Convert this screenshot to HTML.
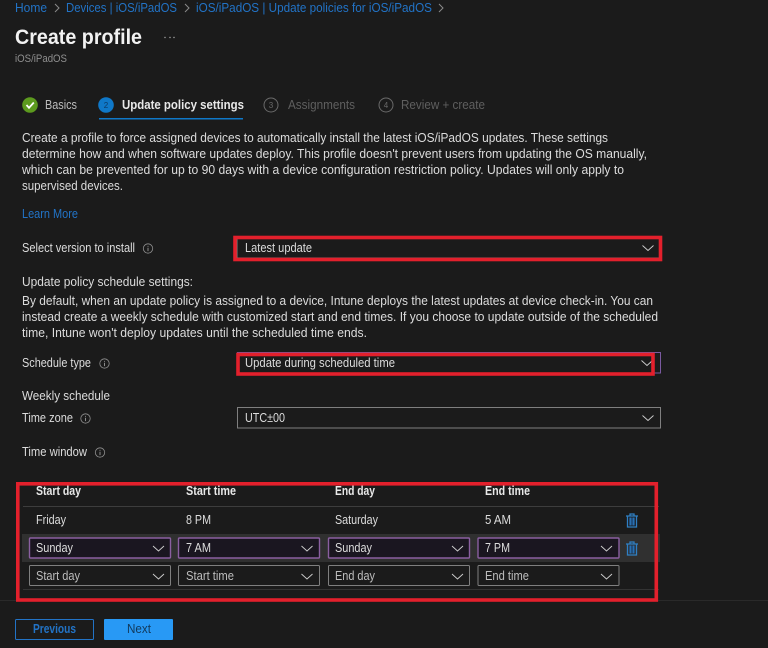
<!DOCTYPE html>
<html><head><meta charset="utf-8"><title>Create profile</title>
<style>
html,body{margin:0;padding:0;background:#1b1b1b;width:768px;height:648px;overflow:hidden}
svg{display:block;font-family:"Liberation Sans",sans-serif;font-size:12.5px;filter:blur(.35px)}
text{fill:#dcdcdc;white-space:pre}
.l{fill:#2273c6}
.m{fill:#5f5f5f}
.h{font-weight:bold;fill:#e8e8e8}
.s{fill:none;stroke:#7f7f7f;stroke-width:1}
.p{fill:#1a1620;stroke:#8a5fa0;stroke-width:1.4}
.c{fill:none;stroke:#cfcfcf;stroke-width:.9}
.i{fill:none;stroke:#8f8f8f;stroke-width:.8}
.r{fill:none;stroke:#e3202c;stroke-width:3.6}
.t{fill:none;stroke:#2f7fc4;stroke-width:1.3}
</style></head><body>
<svg width="768" height="648" viewBox="0 0 768 648" xmlns="http://www.w3.org/2000/svg">
<defs>
<g id="chev"><path class="c" d="M-5.5-2.5 0 2.5 5.5-2.5"/></g>
<g id="info"><circle class="i" r="4.7"/><path d="M0-.8V2.6M0-2.6V-1.7" stroke="#9a9a9a" stroke-width=".9"/></g>
<g id="crumb"><path d="M-2-4 2 0-2 4" fill="none" stroke="#8a8a8a" stroke-width="1"/></g>
<g id="trash"><path class="t" d="M-4.5-4.5V6.5H4.5V-4.5ZM-6-4.5H6M-2-4.5V-6.5H2V-4.500"/><path d="M-3-3H3V5H-3Z" fill="#1f4f80"/><path d="M-1.5-3V5M1.5-3V5" stroke="#2f7fc4" stroke-width=".7"/></g>
</defs>

<text class="l" x="15" y="12" textLength="32" lengthAdjust="spacingAndGlyphs">Home</text>
<use href="#crumb" x="57" y="8"/>
<text class="l" x="66" y="12" textLength="111" lengthAdjust="spacingAndGlyphs">Devices | iOS/iPadOS</text>
<use href="#crumb" x="187" y="8"/>
<text class="l" x="196" y="12" textLength="236" lengthAdjust="spacingAndGlyphs">iOS/iPadOS | Update policies for iOS/iPadOS</text>
<use href="#crumb" x="441" y="8"/>

<text x="15" y="44" style="fill:#f2f2f2;font-size:21px;font-weight:bold" textLength="127" lengthAdjust="spacingAndGlyphs">Create profile</text>
<circle cx="165" cy="37.500" r=".7" fill="#aaa"/><circle cx="170" cy="37.500" r=".7" fill="#aaa"/><circle cx="174" cy="37.500" r=".7" fill="#aaa"/>
<text x="15" y="62" style="fill:#8f8f8f;font-size:11px" textLength="52" lengthAdjust="spacingAndGlyphs">iOS/iPadOS</text>

<circle cx="30" cy="105" r="7.800" fill="#5c9a1e"/>
<path d="M26.500 105 29 107.800 33.800 102.500" fill="none" stroke="#fff" stroke-width="1.800"/>
<text x="45" y="109" style="fill:#bdbdbd" textLength="32" lengthAdjust="spacingAndGlyphs">Basics</text>
<circle cx="106" cy="105" r="7.800" fill="#0f78c8"/>
<text x="106" y="108" text-anchor="middle" style="fill:#0b3a66;font-size:8px">2</text>
<text class="h" x="122" y="109" textLength="122" lengthAdjust="spacingAndGlyphs">Update policy settings</text>
<rect x="99" y="118" width="144" height="1.500" fill="#0f78c8"/>
<circle cx="271" cy="105" r="7" fill="none" stroke="#6a6a6a"/>
<text x="271" y="108" text-anchor="middle" style="fill:#6a6a6a;font-size:8px">3</text>
<text class="m" x="288" y="109" textLength="67" lengthAdjust="spacingAndGlyphs">Assignments</text>
<circle cx="386" cy="105" r="7" fill="none" stroke="#6a6a6a"/>
<text x="386" y="108" text-anchor="middle" style="fill:#6a6a6a;font-size:8px">4</text>
<text class="m" x="401" y="109" textLength="84" lengthAdjust="spacingAndGlyphs">Review + create</text>

<text x="22" y="142" textLength="586" lengthAdjust="spacingAndGlyphs">Create a profile to force assigned devices to automatically install the latest iOS/iPadOS updates. These settings</text>
<text x="22" y="158" textLength="625" lengthAdjust="spacingAndGlyphs">determine how and when software updates deploy. This profile doesn't prevent users from updating the OS manually,</text>
<text x="22" y="174" textLength="602" lengthAdjust="spacingAndGlyphs">which can be prevented for up to 90 days with a device configuration restriction policy. Updates will only apply to</text>
<text x="22" y="190" textLength="101" lengthAdjust="spacingAndGlyphs">supervised devices.</text>
<text class="l" x="22" y="218" textLength="56" lengthAdjust="spacingAndGlyphs">Learn More</text>

<text x="22" y="252" textLength="113" lengthAdjust="spacingAndGlyphs">Select version to install</text>
<use href="#info" x="148" y="248.500"/>
<rect x="237" y="238" width="424" height="20" class="s"/>
<text x="245" y="252" textLength="67" lengthAdjust="spacingAndGlyphs">Latest update</text>
<use href="#chev" x="648" y="248"/>
<rect x="235" y="237.500" width="425.500" height="22" class="r"/>

<text x="22" y="286" textLength="171" lengthAdjust="spacingAndGlyphs">Update policy schedule settings:</text>
<text x="22" y="305" textLength="631" lengthAdjust="spacingAndGlyphs">By default, when an update policy is assigned to a device, Intune deploys the latest updates at device check-in. You can</text>
<text x="22" y="321" textLength="636" lengthAdjust="spacingAndGlyphs">instead create a weekly schedule with customized start and end times. If you choose to update outside of the scheduled</text>
<text x="22" y="337" textLength="345" lengthAdjust="spacingAndGlyphs">time, Intune won't deploy updates until the scheduled time ends.</text>

<text x="22" y="367" textLength="69" lengthAdjust="spacingAndGlyphs">Schedule type</text>
<use href="#info" x="104.500" y="363.500"/>
<rect x="237.500" y="352.500" width="423" height="20.500" fill="none" stroke="#7a5aa0"/>
<text x="245" y="367" textLength="150" lengthAdjust="spacingAndGlyphs">Update during scheduled time</text>
<use href="#chev" x="647" y="363"/>
<rect x="238" y="354.500" width="415" height="19.500" class="r"/>

<text x="22" y="400" textLength="88" lengthAdjust="spacingAndGlyphs">Weekly schedule</text>
<text x="22" y="422" textLength="51" lengthAdjust="spacingAndGlyphs">Time zone</text>
<use href="#info" x="85.500" y="418.500"/>
<rect x="237.500" y="407.500" width="423" height="20.500" class="s"/>
<text x="245" y="422" textLength="40" lengthAdjust="spacingAndGlyphs">UTC±00</text>
<use href="#chev" x="648" y="418"/>
<text x="22" y="456" textLength="65" lengthAdjust="spacingAndGlyphs">Time window</text>
<use href="#info" x="100" y="452.500"/>

<text class="h" x="36" y="495" textLength="45" lengthAdjust="spacingAndGlyphs">Start day</text>
<text class="h" x="186" y="495" textLength="50" lengthAdjust="spacingAndGlyphs">Start time</text>
<text class="h" x="335" y="495" textLength="40" lengthAdjust="spacingAndGlyphs">End day</text>
<text class="h" x="485" y="495" textLength="45" lengthAdjust="spacingAndGlyphs">End time</text>
<rect x="23" y="506" width="636" height="1" fill="#3d3d3d"/>

<text x="36" y="524" textLength="30" lengthAdjust="spacingAndGlyphs">Friday</text>
<text x="186" y="524" textLength="25" lengthAdjust="spacingAndGlyphs">8 PM</text>
<text x="335" y="524" textLength="43" lengthAdjust="spacingAndGlyphs">Saturday</text>
<text x="485" y="524" textLength="26" lengthAdjust="spacingAndGlyphs">5 AM</text>
<use href="#trash" x="632" y="520.500"/>

<rect x="22" y="534" width="638" height="28" fill="#303030"/>
<rect x="29.500" y="538" width="141" height="20" rx="1" class="p"/>
<rect x="178.500" y="538" width="141" height="20" rx="1" class="p"/>
<rect x="328.500" y="538" width="141" height="20" rx="1" class="p"/>
<rect x="478" y="538" width="141" height="20" rx="1" class="p"/>
<text x="36" y="552" textLength="37" lengthAdjust="spacingAndGlyphs">Sunday</text>
<text x="186" y="552" textLength="25" lengthAdjust="spacingAndGlyphs">7 AM</text>
<text x="335" y="552" textLength="37" lengthAdjust="spacingAndGlyphs">Sunday</text>
<text x="485" y="552" textLength="25" lengthAdjust="spacingAndGlyphs">7 PM</text>
<use href="#chev" x="158.500" y="548.500"/><use href="#chev" x="307" y="548.500"/><use href="#chev" x="457.500" y="548.500"/><use href="#chev" x="606.500" y="548.500"/>
<use href="#trash" x="632" y="548.500"/>

<rect x="29.500" y="565.500" width="141" height="20" rx="1" class="s"/>
<rect x="178.500" y="565.500" width="141" height="20" rx="1" class="s"/>
<rect x="328.500" y="565.500" width="141" height="20" rx="1" class="s"/>
<rect x="478" y="565.500" width="141" height="20" rx="1" class="s"/>
<text x="36" y="580" style="fill:#bdbdbd" textLength="44" lengthAdjust="spacingAndGlyphs">Start day</text>
<text x="186" y="580" style="fill:#bdbdbd" textLength="48" lengthAdjust="spacingAndGlyphs">Start time</text>
<text x="335" y="580" style="fill:#bdbdbd" textLength="40" lengthAdjust="spacingAndGlyphs">End day</text>
<text x="485" y="580" style="fill:#bdbdbd" textLength="44" lengthAdjust="spacingAndGlyphs">End time</text>
<use href="#chev" x="158.500" y="576.500"/><use href="#chev" x="307" y="576.500"/><use href="#chev" x="457.500" y="576.500"/><use href="#chev" x="606.500" y="576.500"/>
<rect x="23" y="589" width="636" height="1" fill="#333"/>

<rect x="0" y="600" width="768" height="1" fill="#2a2a2a"/>
<rect x="17.800" y="483.800" width="638.500" height="116.200" class="r"/>

<rect x="15.500" y="619.500" width="78" height="20" rx="1" fill="none" stroke="#2273c6"/>
<text x="33" y="633" style="fill:#2273c6;font-weight:bold" textLength="43" lengthAdjust="spacingAndGlyphs">Previous</text>
<rect x="104" y="619" width="69" height="21" rx="1" fill="#2899f5"/>
<text x="127" y="633" style="fill:#123a5c" textLength="24" lengthAdjust="spacingAndGlyphs">Next</text>
</svg>
</body></html>
